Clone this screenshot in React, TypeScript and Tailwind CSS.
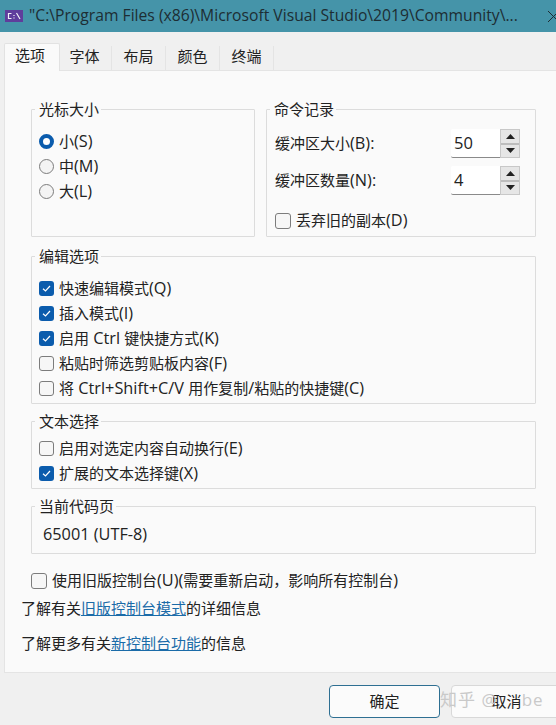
import { ReactNode } from 'react'

const font = { fontFamily: '"Open Sans", "Noto Sans CJK SC", sans-serif' }

// latin runs sit a bit bigger than the cjk around them
function T({ children }: { children: string }) {
  return (
    <>
      {children.split(/([\x20-\x7e]+)/).map((s, i) =>
        /[\x20-\x7e]/.test(s) ? (
          <span key={i} className="text-[16.3px]">{s}</span>
        ) : (
          s
        ),
      )}
    </>
  )
}

function Group({ title, className, inner, children }: { title: string; className: string; inner: string; children: ReactNode }) {
  return (
    <fieldset className={`rounded-[1px] border border-[#dcdcdc] ${className}`}>
      <legend className="ml-[3px] pb-[1px] pl-[4px] pr-[2px] text-[15px] leading-[18px] text-[#222]">{title}</legend>
      <div className={inner}>{children}</div>
    </fieldset>
  )
}

function Radio({ label, checked }: { label: string; checked?: boolean }) {
  return (
    <div className="flex h-[25px] items-center">
      {checked ? (
        <span className="h-[15px] w-[15px] rounded-full border-[4px] border-[#0b5cad] bg-white" />
      ) : (
        <span className="h-[15px] w-[15px] rounded-full border border-[#7c7c7c] bg-[#f4f4f4]" />
      )}
      <span className="ml-[5px] text-[15px] text-[#222]"><T>{label}</T></span>
    </div>
  )
}

function Check({ label, checked, big }: { label: string; checked?: boolean; big?: boolean }) {
  return (
    <div className="flex h-[25px] items-center">
      {checked ? (
        <span className="flex h-[15px] w-[15px] items-center justify-center rounded-[3px] bg-[#0b5cad]">
          <svg width="11" height="11" viewBox="0 0 11 11" fill="none">
            <path d="M2 5.8 4.5 8 9 3" stroke="#fff" strokeWidth="1.2" />
          </svg>
        </span>
      ) : (
        <span className={big ? 'h-[16px] w-[16px] rounded-[3px] border border-[#7c7c7c] bg-[#f6f6f6]' : 'h-[15px] w-[15px] rounded-[3px] border border-[#7c7c7c] bg-[#f6f6f6]'} />
      )}
      <span className="ml-[5px] whitespace-nowrap text-[15px] text-[#222]"><T>{label}</T></span>
    </div>
  )
}

function Spin({ value }: { value: string }) {
  return (
    <div className="flex h-[29px] w-[69px] items-stretch">
      <div className="flex-1 rounded-l-[2px] border-b border-b-[#8a8a8a] bg-white pl-[3px] text-[16.5px] leading-[27px] text-[#222]">{value}</div>
      <div className="flex w-[20px] flex-col border border-[#c8c8c8] bg-[#e6e6e6]">
        <div className="flex flex-1 items-center justify-center border-b-2 border-b-[#bdbdbd]">
          <svg width="9" height="5" viewBox="0 0 9 5"><path d="M4.5 0 9 5H0z" fill="#222" /></svg>
        </div>
        <div className="flex flex-1 items-center justify-center">
          <svg width="9" height="5" viewBox="0 0 9 5"><path d="M4.5 5 9 0H0z" fill="#222" /></svg>
        </div>
      </div>
    </div>
  )
}

const tabs = ['字体', '布局', '颜色', '终端']

export default function App() {
  return (
    <div className="flex h-[725px] w-[556px] flex-col overflow-hidden bg-[#f0f0f0] text-[#222]" style={font}>
      <div className="flex h-[32px] shrink-0 items-center bg-[#4594a9] pl-[5px]">
        <svg width="18" height="12" viewBox="0 0 18 12" className="shrink-0">
          <rect width="18" height="12" fill="#5f3d9c" />
          <path d="M6.5 3.5H3.5V8.5H6.5M9 5V6M9 7.5V8.5M11.5 3 15 9" stroke="#f0f0f8" strokeWidth="1.2" fill="none" />
        </svg>
        <span className="ml-[6px] whitespace-nowrap text-[15.7px] text-[#1d2d33]">"C:\Program Files (x86)\Microsoft Visual Studio\2019\Community\...</span>
        <svg width="13" height="13" viewBox="0 0 13 13" className="ml-auto mr-[-4px] shrink-0">
          <path d="M1 1 12 12M12 1 1 12" stroke="#1d2d33" strokeWidth="1" />
        </svg>
      </div>

      <div className="flex h-[38px] shrink-0 items-end pl-[4px]">
        <div className="relative z-10 mb-[-1px] mr-[-2px] flex h-[28px] w-[56px] items-center justify-center rounded-t-[2px] border border-b-0 border-[#e2e2e2] bg-[#fafafa] pb-[4px] pr-[4px] text-[15px]">选项</div>
        <div className="flex h-[24px]">
          {tabs.map((t) => (
            <div key={t} className="flex w-[54px] items-center justify-center border-r border-[#e4e4e4] pb-[4px] text-[15px]">{t}</div>
          ))}
        </div>
      </div>

      <div className="ml-[4px] flex h-[603px] shrink-0 flex-col border-t border-b border-l border-[#e4e4e4] bg-[#fafafa] pl-[26px] pr-[20px] pt-[29px]">
        <div className="flex gap-[11px]">
          <Group title="光标大小" className="h-[137px] w-[224px]" inner="pl-[7px] pt-[10px]">
            <Radio label="小(S)" checked />
            <Radio label="中(M)" />
            <Radio label="大(L)" />
          </Group>
          <Group title="命令记录" className="h-[137px] w-[270px]" inner="pl-[8px] pr-[15px]">
            <div className="mt-[10px] flex h-[29px] items-center justify-between">
              <span className="text-[15px]"><T>缓冲区大小(B):</T></span>
              <Spin value="50" />
            </div>
            <div className="mt-[8px] flex h-[29px] items-center justify-between">
              <span className="text-[15px]"><T>缓冲区数量(N):</T></span>
              <Spin value="4" />
            </div>
            <div className="mt-[13px]">
              <Check label="丢弃旧的副本(D)" big />
            </div>
          </Group>
        </div>

        <Group title="编辑选项" className="mt-[10px] h-[157px] w-[505px]" inner="pl-[7px] pt-[10px]">
          <Check label="快速编辑模式(Q)" checked />
          <Check label="插入模式(I)" checked />
          <Check label="启用 Ctrl 键快捷方式(K)" checked />
          <Check label="粘贴时筛选剪贴板内容(F)" />
          <Check label="将 Ctrl+Shift+C/V 用作复制/粘贴的快捷键(C)" />
        </Group>

        <Group title="文本选择" className="mt-[8px] h-[77px] w-[505px]" inner="pl-[7px] pt-[5px]">
          <Check label="启用对选定内容自动换行(E)" />
          <Check label="扩展的文本选择键(X)" checked />
        </Group>

        <Group title="当前代码页" className="mt-[8px] h-[57px] w-[505px]" inner="pl-[11px] pt-[7px]">
          <div className="text-[15px] leading-[22px]"><T>65001 (UTF-8)</T></div>
        </Group>

        <div className="mt-[14px]">
          <Check label="使用旧版控制台(U)(需要重新启动，影响所有控制台)" big />
        </div>
        <p className="ml-[-10px] mt-[4px] text-[15px] leading-[22px]">
          了解有关<a className="text-[#1a6ba8] underline">旧版控制台模式</a>的详细信息
        </p>
        <p className="ml-[-10px] mt-[13px] text-[15px] leading-[22px]">
          了解更多有关<a className="text-[#1a6ba8] underline">新控制台功能</a>的信息
        </p>
      </div>

      <div className="relative flex flex-1 gap-[11px] pl-[329px] pt-[12px]">
        <button className="h-[33px] w-[111px] shrink-0 rounded-[4px] border border-[#2e6f92] bg-[#fbfbfb] text-[15px]">确定</button>
        <button className="h-[33px] w-[111px] shrink-0 rounded-[4px] border border-[#d8d8d8] bg-[#fbfbfb] text-[15px]">取消</button>
        <span className="absolute left-[440px] top-[14px] whitespace-nowrap text-[17px] tracking-[1px] text-[#c9c9c9]">知乎 @<span className="ml-[24px]">be</span></span>
      </div>
    </div>
  )
}
